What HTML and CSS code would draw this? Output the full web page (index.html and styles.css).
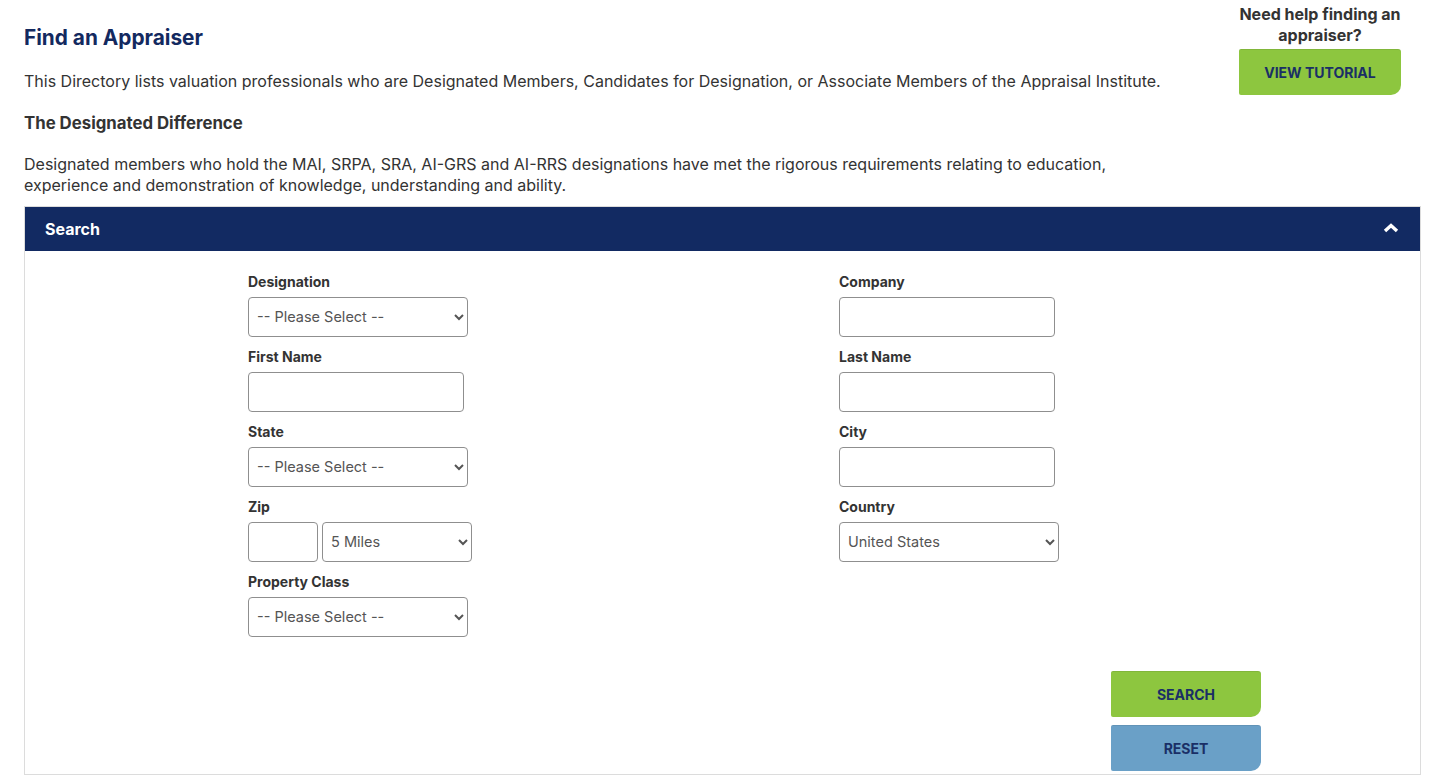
FILE: index.html
```html
<!DOCTYPE html>
<html lang="en">
<head>
    <meta charset="UTF-8">
    <meta name="viewport" content="width=device-width, initial-scale=1.0">
    <title>Find an Appraiser</title>
    <link rel="stylesheet" href="styles.css">
</head>
<body>
    <div class="page">
        <div class="top">
            <div class="intro">
                <h1>Find an Appraiser</h1>
                <p>This Directory lists valuation professionals who are Designated Members, Candidates for Designation, or Associate Members of the Appraisal Institute.</p>
                <h2>The Designated Difference</h2>
                <p class="last">Designated members who hold the MAI, SRPA, SRA, AI-GRS and AI-RRS designations have met the rigorous requirements relating to education, experience and demonstration of knowledge, understanding and ability.</p>
            </div>
            <div class="help">
                <div class="help-text">Need help finding an appraiser?</div>
                <a href="#" class="btn btn-green btn-tutorial">VIEW TUTORIAL</a>
            </div>
        </div>

        <div class="panel">
            <div class="panel-head">
                <span>Search</span>
                <svg class="chevron" width="16" height="10" viewBox="0 0 16 10">
                    <path d="M2 8 L8 2.5 L14 8" fill="none" stroke="#fff" stroke-width="3.4" stroke-linejoin="miter"/>
                </svg>
            </div>
            <form class="panel-body">
                <div class="grid">
                    <div class="col">
                        <div class="field">
                            <label>Designation</label>
                            <select class="wide"><option>-- Please Select --</option></select>
                        </div>
                        <div class="field">
                            <label>First Name</label>
                            <input type="text">
                        </div>
                        <div class="field">
                            <label>State</label>
                            <select class="wide"><option>-- Please Select --</option></select>
                        </div>
                        <div class="field">
                            <label>Zip</label>
                            <div class="zip-row">
                                <input type="text" class="zip">
                                <select class="miles"><option>5 Miles</option></select>
                            </div>
                        </div>
                        <div class="field">
                            <label>Property Class</label>
                            <select class="wide"><option>-- Please Select --</option></select>
                        </div>
                    </div>
                    <div class="col">
                        <div class="field">
                            <label>Company</label>
                            <input type="text">
                        </div>
                        <div class="field">
                            <label>Last Name</label>
                            <input type="text">
                        </div>
                        <div class="field">
                            <label>City</label>
                            <input type="text">
                        </div>
                        <div class="field">
                            <label>Country</label>
                            <select class="wide"><option>United States</option></select>
                        </div>
                    </div>
                </div>
                <div class="actions">
                    <button type="button" class="btn btn-green">SEARCH</button>
                    <button type="reset" class="btn btn-blue">RESET</button>
                </div>
            </form>
        </div>
    </div>
</body>
</html>
```

FILE: styles.css
```css
body {
    margin: 0;
    font-family: Inter, "Liberation Sans", Arial, sans-serif;
    color: #333;
    background: #fff;
}
.page {
    padding: 0 23px 0 24px;
}
.top {
    display: flex;
    justify-content: space-between;
}
.intro {
    width: 1150px;
}
h1 {
    font-size: 20.8px;
    line-height: 24px;
    color: #13295f;
    margin: 26px 0 21px;
}
h2 {
    font-size: 16.8px;
    line-height: 21px;
    margin: 0 0 20px;
    color: #333;
}
p {
    font-size: 16px;
    line-height: 21px;
    margin: 0 0 21px;
}
p.last {
    margin-bottom: 10px;
}
.help {
    width: 162px;
    margin-right: 20px;
    padding-top: 4px;
    text-align: center;
}
.help-text {
    font-size: 16px;
    line-height: 21px;
    font-weight: 700;
    margin-bottom: 3px;
}
.btn {
    display: flex;
    align-items: center;
    justify-content: center;
    height: 46px;
    font-family: inherit;
    font-size: 14px;
    font-weight: 700;
    color: #1a2f66;
    text-decoration: none;
    border: 0;
    border-top: 1px solid rgba(0, 0, 0, 0.08);
    border-radius: 2px 3px 10px 2px;
    cursor: pointer;
    box-sizing: border-box;
}
.btn-green {
    background-color: #8dc63f;
}
.btn-blue {
    background-color: #6aa0c7;
}
.btn-tutorial {
    width: 162px;
}
.panel {
    border: 1px solid #dcdcdc;
}
.panel-head {
    display: flex;
    justify-content: space-between;
    align-items: center;
    height: 44px;
    padding: 0 21px 0 20px;
    background-color: #122a62;
    color: #fff;
    font-size: 16px;
    font-weight: 700;
}
.chevron {
    margin-top: -3px;
}
.panel-body {
    padding: 21px 0 3px 223px;
}
.grid {
    display: grid;
    grid-template-columns: 591px 591px;
}
.field {
    margin-bottom: 10px;
}
.field label {
    display: block;
    font-size: 14px;
    line-height: 20px;
    font-weight: 700;
    color: #333;
    margin-bottom: 5px;
}
input,
select {
    box-sizing: border-box;
    height: 40px;
    border: 1px solid #8f8f8f;
    border-radius: 4px;
    background: #fff;
    font-family: inherit;
    font-size: 14.5px;
    color: #555;
}
input {
    width: 216px;
    padding: 0 8px;
}
select {
    padding: 0 4px 1px;
}
select.wide {
    width: 220px;
}
.zip-row {
    display: flex;
    gap: 4px;
}
input.zip {
    width: 70px;
}
select.miles {
    width: 150px;
}
.actions {
    display: flex;
    flex-direction: column;
    align-items: flex-end;
    gap: 8px;
    margin-top: 24px;
    padding-right: 159px;
}
.actions .btn {
    width: 150px;
}
```
